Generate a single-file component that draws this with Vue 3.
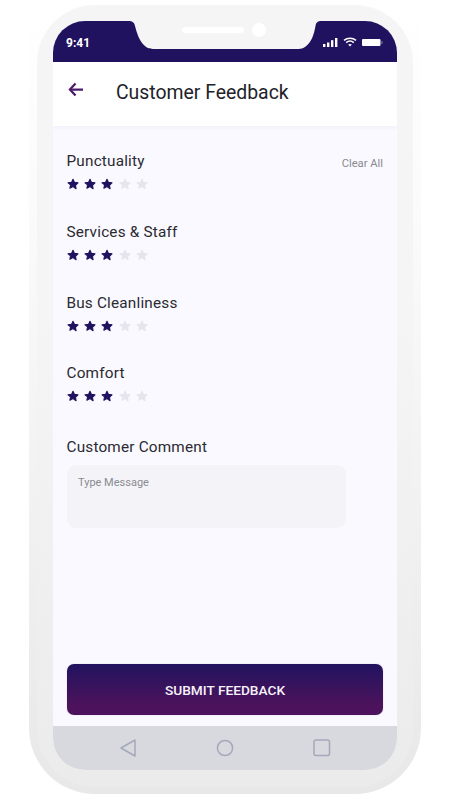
<script setup>
const ratings = [
  { label: 'Punctuality', value: 3 },
  { label: 'Services & Staff', value: 3 },
  { label: 'Bus Cleanliness', value: 3 },
  { label: 'Comfort', value: 3 },
]
</script>

<template>
  <div class="page">
    <div class="outer">
      <div class="shell">
        <div class="screen">
          <div class="status">
            <span class="time">9:41</span>
            <div class="status-icons">
              <svg width="15" height="9" viewBox="0 0 15 9">
                <rect x="0" y="6" width="2.4" height="3" fill="#fff" />
                <rect x="4" y="4.5" width="2.4" height="4.5" fill="#fff" />
                <rect x="8" y="2.2" width="2.4" height="6.8" fill="#fff" />
                <rect x="12" y="0" width="2.4" height="9" fill="#fff" />
              </svg>
              <svg width="14" height="10" viewBox="0 0 14 10" fill="none" stroke="#fff" stroke-width="1.5">
                <path d="M1 3.4C4.4.4 9.6.4 13 3.4" />
                <path d="M3.2 5.6c2.2-1.9 5.4-1.9 7.6 0" />
                <path d="M7 9.6 5.2 7.6c1-.8 2.6-.8 3.6 0Z" fill="#fff" stroke="none" />
              </svg>
              <svg width="21" height="7" viewBox="0 0 21 7">
                <rect x="0" y="0" width="18.5" height="7" rx="1" fill="#fff" />
                <rect x="19.4" y="2.2" width="1" height="2.6" fill="#8f8ab0" />
              </svg>
            </div>
          </div>

          <svg class="notch" width="196" height="29" viewBox="0 0 196 29">
            <path d="M2 0H196C191 0 190 2 189.5 5C188 13 186 21 179 26C176 28 173 28 170 28H30C26 28 22 28 19 25C13 20 11 12 9 5C8.5 2 7 0 2 0Z" fill="#f5f5f5" />
            <rect x="56" y="6" width="62" height="6" rx="3" fill="#fff" />
            <circle cx="133" cy="9" r="7" fill="#fff" />
          </svg>

          <header class="topbar">
            <svg class="back" width="16" height="15" viewBox="0 0 17 16" fill="none" stroke="#4c1a6d" stroke-width="2.4">
              <path d="M8 1.5 2 8l6 6.5" />
              <path d="M2.5 8H16" />
            </svg>
            <h1 class="title">Customer Feedback</h1>
          </header>

          <main class="content">
            <a class="clear">Clear All</a>
            <section v-for="item in ratings" :key="item.label" class="rating">
              <div class="label">{{ item.label }}</div>
              <div class="stars">
                <svg
                  v-for="n in 5"
                  :key="n"
                  width="12"
                  height="12"
                  viewBox="0 0 24 24"
                  :class="n <= item.value ? 'on' : 'off'"
                >
                  <path d="M12 2.4l3 6.4 7 .9-5.1 4.8 1.3 6.9L12 17.1l-6.2 3.3 1.3-6.9L2 9.7l7-.9z" />
                </svg>
              </div>
            </section>

            <section class="comment">
              <div class="label">Customer Comment</div>
              <div class="message">Type Message</div>
            </section>

            <button class="submit">SUBMIT FEEDBACK</button>
          </main>

          <nav class="navbar">
            <svg width="18" height="20" viewBox="0 0 18 20" fill="none" stroke="#a4a9ba" stroke-width="1.5" stroke-linejoin="round">
              <path d="M16 2V18L2 10Z" />
            </svg>
            <svg width="18" height="18" viewBox="0 0 18 18" fill="none" stroke="#a4a9ba" stroke-width="1.5">
              <circle cx="9" cy="9" r="7.6" />
            </svg>
            <svg width="18" height="18" viewBox="0 0 18 18" fill="none" stroke="#a4a9ba" stroke-width="1.5">
              <rect x="1" y="1" width="15.5" height="15.5" rx="2" />
            </svg>
          </nav>
        </div>
      </div>
    </div>
  </div>
</template>

<style>
html, body { margin: 0; background: #fff; }
</style>

<style scoped>
.page {
  width: 450px;
  height: 800px;
  box-sizing: border-box;
  padding: 0 29px 6px;
  display: flex;
  overflow: hidden;
  font-family: Roboto, "Liberation Sans", sans-serif;
}
.outer {
  flex: 1;
  box-sizing: border-box;
  padding: 5px 8px 7px;
  border-radius: 0 0 66px 66px;
  background: linear-gradient(180deg, #ffffff 0%, #fafafa 30%, #e8e8e8 100%);
  display: flex;
}
.shell {
  flex: 1;
  box-sizing: border-box;
  padding: 16px 16px 17px;
  border-radius: 58px;
  background: linear-gradient(180deg, #f5f5f5 0%, #f5f5f5 40%, #ebebeb 100%);
  display: flex;
}
.screen {
  flex: 1;
  position: relative;
  display: flex;
  flex-direction: column;
  border-radius: 32px;
  overflow: hidden;
  background: #faf9ff;
}
.status {
  height: 41px;
  flex: none;
  box-sizing: border-box;
  background: #21125f;
  padding: 16px 14px 0 13px;
  display: flex;
  justify-content: space-between;
  align-items: flex-start;
}
.time {
  color: #fff;
  font-size: 12px;
  font-weight: 700;
  line-height: 12px;
}
.status-icons {
  display: flex;
  align-items: center;
  gap: 5px;
  height: 10px;
}
.notch {
  position: absolute;
  left: 73px;
  top: 0;
}
.topbar {
  height: 64px;
  flex: none;
  box-sizing: border-box;
  background: #fff;
  display: flex;
  align-items: flex-start;
  padding: 20px 0 0 15px;
  box-shadow: 0 2px 4px rgba(40, 30, 90, 0.04);
  position: relative;
}
.back { flex: none; }
.title {
  margin: 0 0 0 32px;
  font-size: 19.4px;
  font-weight: 400;
  line-height: 22px;
  color: #222228;
}
.content {
  flex: 1;
  position: relative;
  display: flex;
  flex-direction: column;
  box-sizing: border-box;
  padding: 25px 14px 11px;
  min-height: 0;
}
.clear {
  position: absolute;
  right: 14px;
  top: 31px;
  font-size: 11.2px;
  line-height: 14px;
  color: #8a8a90;
}
.rating { margin-bottom: 31.8px; }
.label {
  font-size: 15.3px;
  line-height: 20px;
  color: #2a2a30;
  letter-spacing: 0.2px;
  margin-left: -0.5px;
}
.stars {
  display: flex;
  gap: 5.2px;
  margin-top: 7px;
  height: 12px;
}
.on { fill: #21125f; stroke: #21125f; stroke-width: 2.2px; stroke-linejoin: round; }
.off { fill: #e5e5ee; stroke: #e5e5ee; stroke-width: 2.2px; stroke-linejoin: round; }
.comment { margin-top: 3px; }
.message {
  width: 279px;
  height: 63px;
  margin-top: 8px;
  box-sizing: border-box;
  padding: 11px 11px;
  border-radius: 9px;
  background: #f4f4f8;
  color: #8a8a90;
  font-size: 11px;
  line-height: 14px;
}
.submit {
  margin-top: auto;
  height: 51px;
  flex: none;
  border: none;
  border-radius: 7px;
  background: linear-gradient(180deg, #21135f 0%, #4c135c 80%);
  box-shadow: 0 0 1px rgba(76, 19, 92, 0.4);
  color: #f6f2fa;
  font-family: inherit;
  font-size: 13.7px;
  font-weight: 500;
  padding: 0;
}
.navbar {
  height: 44px;
  flex: none;
  background: #d8d9df;
  display: grid;
  grid-template-columns: repeat(3, 18px);
  justify-content: center;
  column-gap: 79px;
  align-items: center;
}
</style>
